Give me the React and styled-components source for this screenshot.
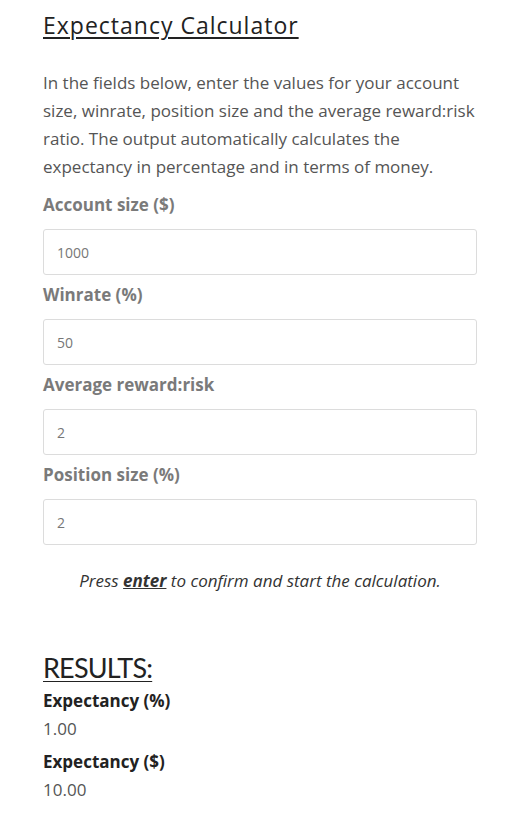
import React from "react";
import styled, { createGlobalStyle } from "styled-components";

const Global = createGlobalStyle`
  html, body { margin: 0; padding: 0; background: #fff; }
  body { font-family: "Open Sans", "Liberation Sans", sans-serif; color: #555; }
`;

const Page = styled.div`
  padding: 8px 33px 20px 43px;
  display: flex;
  flex-direction: column;
`;

const Title = styled.h2`
  margin: 0;
  align-self: flex-start;
  font-family: "Open Sans", "Noto Sans", sans-serif;
  font-weight: 400;
  font-size: 23px;
  line-height: 34px;
  letter-spacing: 1px;
  color: #222;
  text-decoration: underline;
  text-decoration-thickness: 2px;
  text-underline-offset: 3px;
`;

const Intro = styled.p`
  margin: 27px 0 0;
  font-size: 17px;
  line-height: 28px;
  color: #555;
`;

const Field = styled.div`
  display: flex;
  flex-direction: column;
`;

const Label = styled.label`
  font-weight: 700;
  font-size: 17px;
  line-height: 24px;
  color: #7a7a7a;
  margin: ${(p) => (p.$first ? "12px" : "8px")} 0 12px;
`;

const Input = styled.input`
  box-sizing: border-box;
  height: 46px;
  width: 100%;
  border: 1px solid #dcdcdc;
  border-radius: 3px;
  padding: 0 13px;
  font-family: "Open Sans", sans-serif;
  font-size: 14px;
  color: #777;
  background: #fff;
  outline: none;
`;

const Hint = styled.p`
  margin: 24px 0 0;
  text-align: center;
  font-style: italic;
  font-size: 17px;
  line-height: 24px;
  color: #333;
`;

const Key = styled.span`
  font-weight: 700;
  text-decoration: underline;
`;

const ResultsTitle = styled.h3`
  margin: 60px 0 0;
  align-self: flex-start;
  font-family: "Lato", "Noto Sans", sans-serif;
  font-weight: 400;
  font-size: 27px;
  line-height: 30px;
  letter-spacing: -0.8px;
  color: #222;
  text-decoration: underline;
  text-decoration-thickness: 1px;
  text-underline-offset: 3px;
`;

const ResultLabel = styled.div`
  font-weight: 700;
  font-size: 17px;
  line-height: 24px;
  color: #222;
  margin-top: ${(p) => (p.$first ? "6px" : "9px")};
`;

const ResultValue = styled.div`
  font-size: 17px;
  line-height: 24px;
  color: #555;
  margin-top: 4px;
`;

const fields = [
  ["Account size ($)", "1000"],
  ["Winrate (%)", "50"],
  ["Average reward:risk", "2"],
  ["Position size (%)", "2"],
];

export default function App() {
  return (
    <>
      <Global />
      <Page>
        <Title>Expectancy Calculator</Title>
        <Intro>
          In the fields below, enter the values for your account size, winrate,
          position size and the average reward:risk ratio. The output
          automatically calculates the expectancy in percentage and in terms of
          money.
        </Intro>
        {fields.map(([label, value], i) => (
          <Field key={label}>
            <Label $first={i === 0}>{label}</Label>
            <Input defaultValue={value} />
          </Field>
        ))}
        <Hint>
          Press <Key>enter</Key> to confirm and start the calculation.
        </Hint>
        <ResultsTitle>RESULTS:</ResultsTitle>
        <ResultLabel $first>Expectancy (%)</ResultLabel>
        <ResultValue>1.00</ResultValue>
        <ResultLabel>Expectancy ($)</ResultLabel>
        <ResultValue>10.00</ResultValue>
      </Page>
    </>
  );
}
